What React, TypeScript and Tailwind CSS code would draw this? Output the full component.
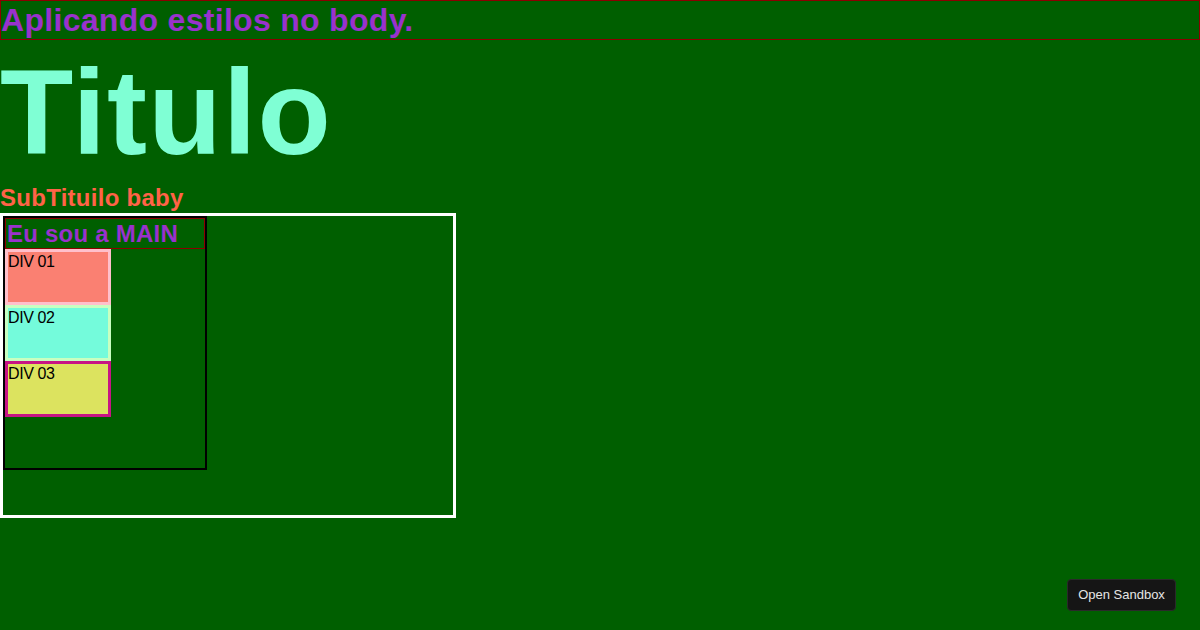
export default function App() {
  return (
    <div className="relative min-h-screen w-full bg-[#005f00] font-['Liberation_Sans',Arial,sans-serif] text-black">
      <header className="h-[40px] border border-[#8b0000]">
        <h1 className="text-[32px] font-bold leading-[38px] tracking-[0.3px] text-[#9932cc]">Aplicando estilos no body.</h1>
      </header>

      <h1 className="text-[120px] font-bold leading-[144px] tracking-[1.3px] text-[#7fffd4]">Titulo</h1>
      <h2 className="text-[24px] font-bold leading-[28px] tracking-[0.27px] text-[#ff6347]">SubTituilo baby</h2>

      <section className="mt-[1px] h-[305px] w-[456px] border-[3px] border-white">
        <main className="h-[254px] w-[204px] border-2 border-black">
          <h2 className="h-[31px] border border-[#8b0000] pl-[1px] text-[24px] font-bold leading-[29px] tracking-[0.23px] text-[#9932cc]">
            Eu sou a MAIN
          </h2>
          <div className="h-[56px] w-[106px] border-[3px] border-[#ffc0cb] bg-[#fa8072] text-[16px] leading-[19px] tracking-[-0.4px]">DIV 01</div>
          <div className="h-[56px] w-[106px] border-[3px] border-[#c8ffc0] bg-[#74fbdb] text-[16px] leading-[19px] tracking-[-0.4px]">DIV 02</div>
          <div className="h-[56px] w-[106px] border-[3px] border-[#c71585] bg-[#dce35f] text-[16px] leading-[19px] tracking-[-0.4px]">DIV 03</div>
        </main>
      </section>

      <button
        type="button"
        className="fixed bottom-[19px] right-[24px] h-[32px] w-[109px] rounded-[4px] border border-[#2a2a2a] bg-[#151515] font-['Liberation_Sans',Arial,sans-serif] text-[13px] text-[#e5e5e5]"
      >
        Open Sandbox
      </button>
    </div>
  );
}
